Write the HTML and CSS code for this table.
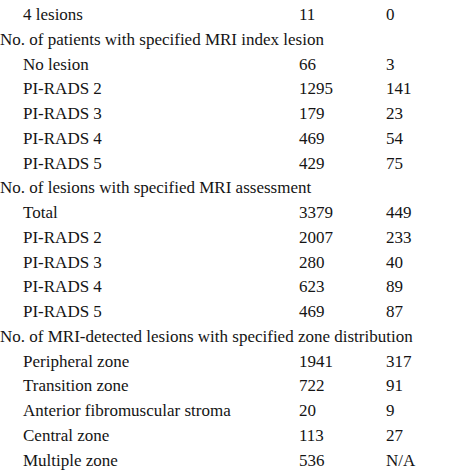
FILE: index.html
```html
<!DOCTYPE html>
<html>
<head>
<meta charset="utf-8">
<link rel="stylesheet" href="styles.css">
</head>
<body>
<div class="table">
  <div class="row sub"><span>4 lesions</span><span>11</span><span>0</span></div>
  <div class="row head"><span>No. of patients with specified MRI index lesion</span></div>
  <div class="row sub"><span>No lesion</span><span>66</span><span>3</span></div>
  <div class="row sub"><span>PI-RADS 2</span><span>1295</span><span>141</span></div>
  <div class="row sub"><span>PI-RADS 3</span><span>179</span><span>23</span></div>
  <div class="row sub"><span>PI-RADS 4</span><span>469</span><span>54</span></div>
  <div class="row sub"><span>PI-RADS 5</span><span>429</span><span>75</span></div>
  <div class="row head"><span>No. of lesions with specified MRI assessment</span></div>
  <div class="row sub"><span>Total</span><span>3379</span><span>449</span></div>
  <div class="row sub"><span>PI-RADS 2</span><span>2007</span><span>233</span></div>
  <div class="row sub"><span>PI-RADS 3</span><span>280</span><span>40</span></div>
  <div class="row sub"><span>PI-RADS 4</span><span>623</span><span>89</span></div>
  <div class="row sub"><span>PI-RADS 5</span><span>469</span><span>87</span></div>
  <div class="row head"><span>No. of MRI-detected lesions with specified zone distribution</span></div>
  <div class="row sub"><span>Peripheral zone</span><span>1941</span><span>317</span></div>
  <div class="row sub"><span>Transition zone</span><span>722</span><span>91</span></div>
  <div class="row sub"><span>Anterior fibromuscular stroma</span><span>20</span><span>9</span></div>
  <div class="row sub"><span>Central zone</span><span>113</span><span>27</span></div>
  <div class="row sub"><span>Multiple zone</span><span>536</span><span>N/A</span></div>
</div>
</body>
</html>
```
FILE: styles.css
```css
html, body {
  margin: 0;
  padding: 0;
  background: #ffffff;
}
body {
  font-family: "Liberation Serif", "Times New Roman", serif;
  font-size: 17px;
  color: #141414;
  overflow: hidden;
}
.table {
  padding-top: 3px;
  display: flex;
  flex-direction: column;
}
.row {
  display: grid;
  grid-template-columns: 299px 87px 1fr;
  height: 24.78px;
  line-height: 24.78px;
  white-space: nowrap;
}
.row.head span {
  grid-column: 1 / 4;
}
.row.sub span:first-child {
  padding-left: 23px;
}
```
